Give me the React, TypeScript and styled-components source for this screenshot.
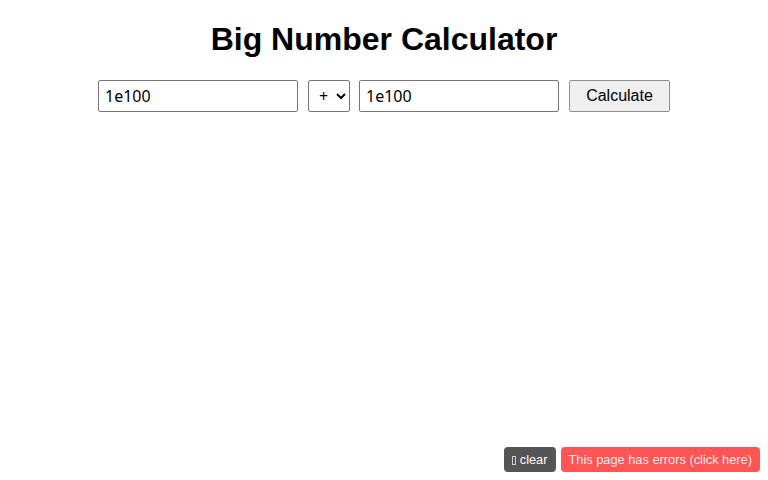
import React, { useState } from "react";
import styled, { createGlobalStyle } from "styled-components";

const GlobalStyle = createGlobalStyle`
  html, body {
    margin: 0;
    padding: 0;
    background: #ffffff;
    font-family: "Liberation Sans", Arial, sans-serif;
  }
`;

const Page = styled.div`
  height: 480px;
  position: relative;
  overflow: hidden;
`;

const Title = styled.h1`
  font-size: 32px;
  font-weight: bold;
  text-align: center;
  color: #000;
  margin: 21.44px 0;
  line-height: 37px;
`;

const Row = styled.div`
  display: flex;
  justify-content: center;
  align-items: center;
  gap: 10px;
`;

const NumberInput = styled.input`
  box-sizing: border-box;
  width: 200px;
  height: 32px;
  padding: 0 6px;
  border: 1px solid #767676;
  border-radius: 2px;
  font-family: "Noto Sans", sans-serif;
  font-size: 16px;
  color: #000;
  background: #fff;
`;

const OpSelect = styled.select`
  box-sizing: border-box;
  width: 42px;
  height: 32px;
  padding: 0 2px 0 6px;
  border: 1px solid #767676;
  border-radius: 2px;
  font-family: "Noto Sans", sans-serif;
  font-size: 16px;
  background: #fff;
  color: #000;
  margin-right: -1px;
`;

const CalcButton = styled.button`
  box-sizing: border-box;
  width: 101px;
  height: 32px;
  border: 1px solid #8f8f8f;
  border-radius: 2px;
  background: #efefef;
  font-family: "Liberation Sans", Arial, sans-serif;
  font-size: 16px;
  color: #000;
`;

const ErrorBar = styled.div`
  position: absolute;
  right: 8px;
  bottom: 8px;
  display: flex;
  gap: 5px;
`;

const Pill = styled.button<{ $tone: "dark" | "red" }>`
  height: 25px;
  padding: 0 8px;
  border: none;
  border-radius: 4px;
  background: ${(p) => (p.$tone === "dark" ? "#555555" : "#ff5555")};
  color: ${(p) => (p.$tone === "dark" ? "#ffffff" : "#fde8e8")};
  font-family: "Liberation Sans", Arial, sans-serif;
  font-size: 12.8px;
  white-space: nowrap;
`;

const MissingGlyph = styled.span`
  display: inline-block;
  box-sizing: border-box;
  width: 4px;
  height: 9px;
  border: 1px solid #cfcfcf;
  margin-right: 4px;
  vertical-align: -1px;
`;

export default function App() {
  const [a, setA] = useState("1e100");
  const [b, setB] = useState("1e100");
  const [op, setOp] = useState("+");

  return (
    <Page>
      <GlobalStyle />
      <Title>Big Number Calculator</Title>
      <Row>
        <NumberInput value={a} onChange={(e) => setA(e.target.value)} />
        <OpSelect value={op} onChange={(e) => setOp(e.target.value)}>
          <option value="+">+</option>
          <option value="-">-</option>
          <option value="*">*</option>
          <option value="/">/</option>
        </OpSelect>
        <NumberInput value={b} onChange={(e) => setB(e.target.value)} />
        <CalcButton>Calculate</CalcButton>
      </Row>
      <ErrorBar>
        <Pill $tone="dark">
          <MissingGlyph />
          clear
        </Pill>
        <Pill $tone="red">This page has errors (click here)</Pill>
      </ErrorBar>
    </Page>
  );
}
